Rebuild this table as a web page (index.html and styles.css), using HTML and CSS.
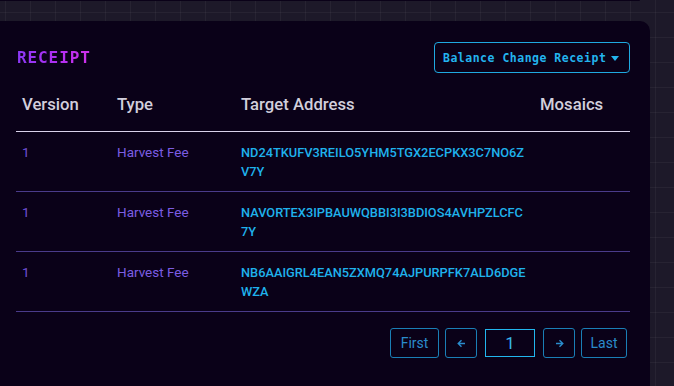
FILE: index.html
```html
<!DOCTYPE html>
<html lang="en">
<head>
<meta charset="utf-8">
<title>Receipt</title>
<link rel="stylesheet" href="styles.css">
</head>
<body>
  <div class="prev-card"></div>
  <section class="card">
    <header class="card-head">
      <h2 class="card-title">RECEIPT</h2>
      <button class="dropdown" type="button">
        <span>Balance Change Receipt</span>
        <svg class="caret" width="8" height="5" viewBox="0 0 8 5"><path d="M0 0h8L4 5z" fill="currentColor"/></svg>
      </button>
    </header>

    <table class="receipts">
      <colgroup>
        <col class="c-version">
        <col class="c-type">
        <col class="c-address">
        <col class="c-mosaics">
      </colgroup>
      <thead>
        <tr>
          <th>Version</th>
          <th>Type</th>
          <th>Target Address</th>
          <th>Mosaics</th>
        </tr>
      </thead>
      <tbody>
        <tr>
          <td class="version">1</td>
          <td class="type">Harvest Fee</td>
          <td class="address">ND24TKUFV3REILO5YHM5TGX2ECPKX3C7NO6ZV7Y</td>
          <td></td>
        </tr>
        <tr>
          <td class="version">1</td>
          <td class="type">Harvest Fee</td>
          <td class="address">NAVORTEX3IPBAUWQBBI3I3BDIOS4AVHPZLCFC7Y</td>
          <td></td>
        </tr>
        <tr>
          <td class="version">1</td>
          <td class="type">Harvest Fee</td>
          <td class="address">NB6AAIGRL4EAN5ZXMQ74AJPURPFK7ALD6DGEWZA</td>
          <td></td>
        </tr>
      </tbody>
    </table>

    <nav class="pager">
      <button class="pg pg-first" type="button">First</button>
      <button class="pg pg-arrow" type="button" aria-label="Previous">
        <svg width="9" height="9" viewBox="0 0 9 9"><path d="M8 4.5H1.2M4.5 1.2L1.2 4.5l3.3 3.3" fill="none" stroke="currentColor" stroke-width="1.4"/></svg>
      </button>
      <input class="pg-input" type="text" value="1">
      <button class="pg pg-arrow" type="button" aria-label="Next">
        <svg width="9" height="9" viewBox="0 0 9 9"><path d="M1 4.5h6.8M4.5 1.2l3.3 3.3-3.3 3.3" fill="none" stroke="currentColor" stroke-width="1.4"/></svg>
      </button>
      <button class="pg pg-last" type="button">Last</button>
    </nav>
  </section>
</body>
</html>
```

FILE: styles.css
```css
html, body {
  margin: 0;
  padding: 0;
}

body {
  width: 674px;
  height: 386px;
  overflow: hidden;
  background-color: #1d1929;
  background-image:
    linear-gradient(to right, rgba(255, 255, 255, 0.045) 1px, transparent 1px),
    linear-gradient(to bottom, rgba(255, 255, 255, 0.045) 1px, transparent 1px);
  background-size: 25px 25px;
  background-position: 5px 12px;
  font-family: Roboto, "Liberation Sans", sans-serif;
}

.prev-card {
  height: 1px;
  margin-right: 34px;
  background: #0a0118;
  border-radius: 0 0 10px 0;
}

.card {
  margin: 20px 24px 0 -10px;
  width: 660px;
  box-sizing: border-box;
  padding: 21px 20px 40px 26px;
  background: #0a0118;
  border-radius: 10px;
}

.card-head {
  display: flex;
  align-items: center;
  justify-content: space-between;
  height: 31px;
}

.card-title {
  margin: 0 0 0 1px;
  font-family: "DejaVu Sans Mono", monospace;
  font-size: 16px;
  font-weight: bold;
  letter-spacing: 0.9px;
  line-height: 1;
  background: linear-gradient(90deg, #8a38f4 0%, #b52ef2 60%, #d030ea 100%);
  -webkit-background-clip: text;
  background-clip: text;
  color: transparent;
}

.dropdown {
  display: flex;
  align-items: center;
  gap: 5px;
  height: 31px;
  width: 196px;
  box-sizing: border-box;
  padding: 0 8px 0 8px;
  background: transparent;
  border: 1px solid #1fa9e0;
  border-radius: 4px;
  color: #23b4ee;
  font-family: "DejaVu Sans Mono", monospace;
  font-size: 11.5px;
  font-weight: bold;
  letter-spacing: 0.5px;
}

.caret {
  margin-top: 1px;
  flex: none;
}

.receipts {
  width: 614px;
  margin-top: 14px;
  border-collapse: collapse;
  table-layout: fixed;
}

.c-version { width: 95px; }
.c-type { width: 124px; }
.c-address { width: 299px; }
.c-mosaics { width: 96px; }

.receipts th {
  text-align: left;
  font-weight: 500;
  font-size: 16.7px;
  color: #d2cfdc;
  line-height: 20px;
  padding: 8px 6px 16px;
  border-bottom: 1px solid #d9d2ea;
}

.receipts td {
  padding: 11px 6px 10px;
  line-height: 19px;
  vertical-align: top;
  border-bottom: 1px solid #4a3b8a;
}

.version {
  font-size: 13.5px;
  color: #7050d6;
}

.type {
  font-size: 13.5px;
  color: #7c5de2;
}

.receipts td.address {
  padding-right: 8px;
  font-size: 12.8px;
  font-weight: 500;
  letter-spacing: 0;
  color: #1fb2ec;
  word-break: break-all;
}

.pager {
  display: flex;
  justify-content: flex-end;
  align-items: center;
  gap: 6px;
  margin-top: 16px;
  padding-right: 3px;
}

.pg {
  display: flex;
  align-items: center;
  justify-content: center;
  height: 30px;
  box-sizing: border-box;
  background: transparent;
  border: 1px solid #1a7fb6;
  border-radius: 3px;
  color: #2a8ccc;
  font-family: Roboto, "Liberation Sans", sans-serif;
  font-size: 14px;
  padding: 0;
}

.pg-first { width: 49px; }
.pg-last { width: 46px; }
.pg-arrow { width: 32px; }

.pg-input {
  width: 50px;
  height: 28px;
  box-sizing: border-box;
  margin: 0 2px;
  background: transparent;
  border: 1px solid #22b6ee;
  border-radius: 0;
  color: #37b6ea;
  text-align: center;
  font-family: Roboto, "Liberation Sans", sans-serif;
  font-size: 17px;
  padding: 0;
}
```
